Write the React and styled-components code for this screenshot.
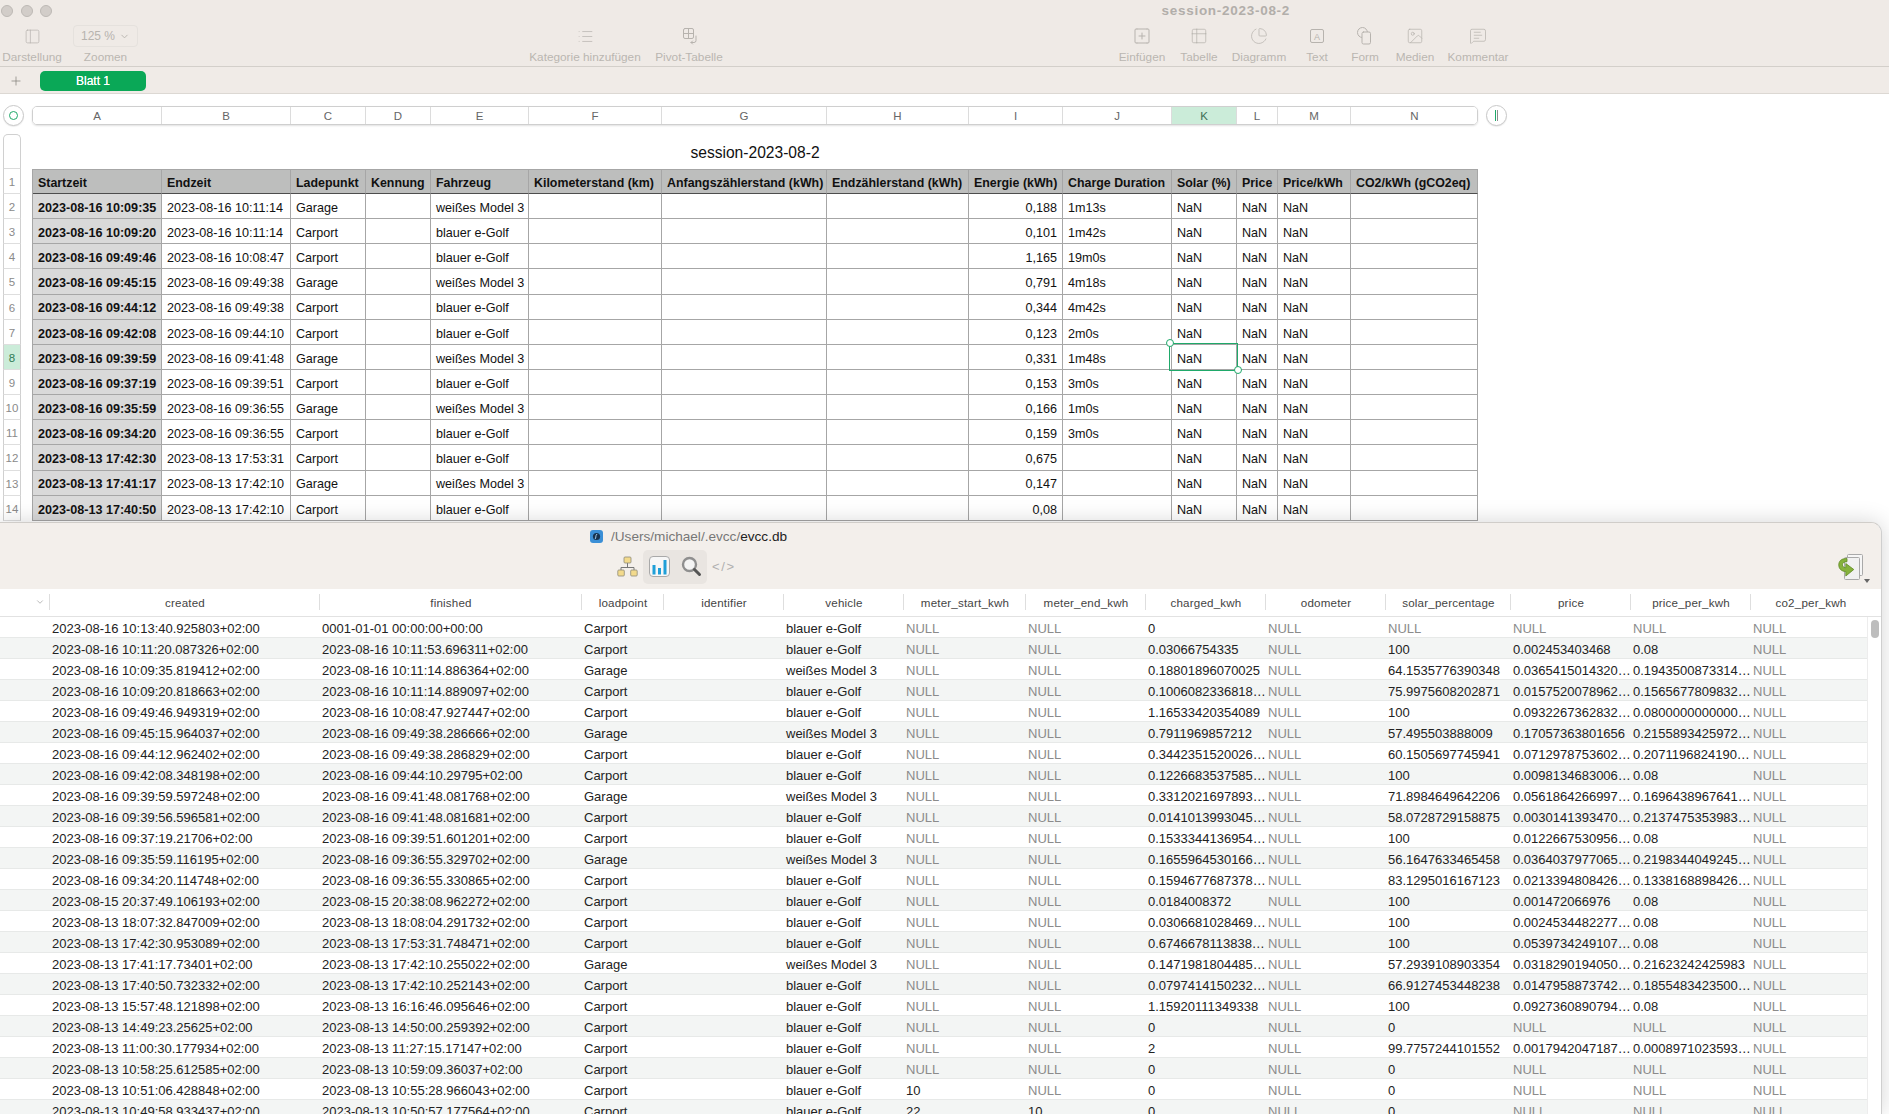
import React from "react";
import styled, { createGlobalStyle } from "styled-components";
import { Plus, ChevronDown, List, Table2, PanelLeft, ChartPie, Image as ImageIcon, MessageSquareText } from "lucide-react";

const Global = createGlobalStyle`
  html, body { margin: 0; padding: 0; background: #fff; }
  body { font-family: "Liberation Sans", Arial, sans-serif; color: #111; }
  * { box-sizing: border-box; }
`;

const Page = styled.div`
  width: 1889px; height: 1114px; overflow: hidden; background: #fff;
  display: flex; flex-direction: column;
`;
const NumbersWindow = styled.section`
  flex: 0 0 522px; height: 522px; overflow: hidden; display: flex; flex-direction: column;
`;
const Toolbar = styled.header`
  flex: 0 0 67px; background: #efeae6; border-bottom: 1px solid #d3cfca;
  display: flex; flex-direction: column; 
`;
const TitleRow = styled.div`
  height: 21px; display: flex; align-items: center; padding-left: 1px; margin-bottom: 1px;
`;
const Light = styled.span`
  width: 12px; height: 12px; border-radius: 50%; background: #d2cdc9; border: 1px solid #bdb9b5;
  margin-right: 7.5px;
`;
const DocTitle = styled.div`
  margin-left: 1102px; font-size: 13.5px; font-weight: 700; letter-spacing: .72px; color: #b2aeaa; white-space: nowrap;
`;
const ToolRow = styled.div`
  display: flex; height: 44px; align-items: flex-start;
`;
const ToolItem = styled.div`
  flex: 0 0 ${p => p.$w}px; margin-left: ${p => p.$gap || 0}px;
  display: flex; flex-direction: column; align-items: center; color: #b7b3ae;
`;
const ToolGlyph = styled.div`
  height: 25px; padding-top: 3px; display: flex; align-items: center; justify-content: center;
`;
const ToolLabel = styled.div`
  margin-top: 3px; font-size: 11.8px; line-height: 14px; color: #bab6b1; white-space: nowrap;
`;
const ZoomBox = styled.div`
  width: 65px; height: 22px; border: 1px solid #e5e1dd; border-radius: 4px; margin-top: 3px;
  display: flex; align-items: center; justify-content: center; gap: 4px;
  font-size: 12px; color: #b7b3ae;
`;
const TabBar = styled.nav`
  flex: 0 0 27px; background: #f0ebe7; border-bottom: 1px solid #dcd8d3;
  display: flex; align-items: center; color: #7f7b77; padding: 1px 0 0 9px;
`;
const Tab = styled.div`
  margin-left: 17px; width: 106px; height: 20px; border-radius: 5px; background: #0aa857; color: #fff;
  display: flex; align-items: center; justify-content: center; font-size: 12px; font-weight: 400;
  text-shadow: 0 0 .5px #fff;
`;
const SheetArea = styled.main`
  flex: 1; min-height: 0; background: #fff; padding-top: 11px;
`;
const SheetHead = styled.div`
  height: 21px; display: flex; align-items: center; padding-left: 3px;
`;
const RoundControl = styled.div`
  flex: 0 0 21px; height: 21px; border-radius: 50%; border: 1px solid #c9c9c9; background: #fff;
  display: flex; align-items: center; justify-content: center; box-shadow: 0 1px 1px rgba(0,0,0,.08);
  margin: ${p => p.$right ? "0 0 0 8px" : "0 8px 0 0"};
`;
const Ring = styled.span`
  width: 9px; height: 9px; border-radius: 50%; border: 1.5px solid #1fa96a;
`;
const Bars = styled.span`
  width: 3.5px; height: 11px; border-left: 1px solid #1fa96a; border-right: 1px solid #8d8d8d;
`;
const colTemplate = "129px 129px 75px 65px 98px 133px 165px 142px 94px 109px 65px 41px 73px 127px";
const ColumnStrip = styled.div`
  display: grid; grid-template-columns: ${colTemplate}; width: 1446px; height: 19px;
  border: 1px solid #cfcfcf; border-right-width: 1px; border-radius: 5px; overflow: hidden;
  box-shadow: 0 1px 2px rgba(0,0,0,.12);
`;
const ColumnLetter = styled.div`
  display: flex; align-items: center; justify-content: center; font-size: 11.5px;
  color: ${p => p.$active ? "#3f6f56" : "#666"};
  background: ${p => p.$active ? "#cbecd9" : "#fff"};
  border-right: ${p => p.$last ? 0 : 1}px solid #dcdcdc;
`;
const SheetBody = styled.div`
  display: flex; margin-top: 8px; padding-left: 3px;
`;
const Gutter = styled.div`
  flex: 0 0 18px; margin-right: 11px; display: flex; flex-direction: column;
`;
const GutterTop = styled.div`
  height: 35px; border: 1px solid #d0d0d0; border-bottom-color: #dcdcdc; border-radius: 5px 5px 0 0;
`;
const RowNumber = styled.div`
  height: ${p => p.$h}px; border: 1px solid #d0d0d0; border-top: 0; border-bottom-color: #dedede;
  display: flex; align-items: center; justify-content: center; font-size: 11.5px; padding-top: 2px;
  color: ${p => p.$active ? "#2f7d55" : "#8a8a8a"};
  background: ${p => p.$active ? "#cbecd9" : "#fff"};
`;
const SheetColumn = styled.div`
  display: flex; flex-direction: column;
`;
const SheetTitle = styled.div`
  height: 35px; width: 1446px; display: flex; align-items: center; justify-content: center;
  font-size: 15.6px; color: #111; padding-top: 2px;
`;
const Table = styled.div`
  display: grid; grid-template-columns: ${colTemplate};
  grid-template-rows: 25px repeat(13, 25.15px);
  border-left: 1px solid #a6a6a6; width: 1446px;
`;
const HeadCell = styled.div`
  background: #bdbebd; border-right: 1px solid #a6a6a6; border-top: 1px solid #a6a6a6;
  border-bottom: 1.5px solid #4d4d4d; display: flex; align-items: center; padding: 2px 5px 0;
  font-size: 12.4px; font-weight: 700; white-space: nowrap; color: #111;
`;
const Cell = styled.div`
  position: relative; display: flex; align-items: center; padding: 3.5px 5px 0; font-size: 12.6px; white-space: nowrap; color: #111;
  justify-content: ${p => p.$right ? "flex-end" : "flex-start"};
  font-weight: ${p => p.$bold ? 700 : 400};
  background: ${p => p.$bold ? "#d9d9d9" : "#fff"};
  border-right: 1px solid #a6a6a6; border-bottom: 1px solid #a6a6a6;
`;
const Selection = styled.div`
  position: absolute; top: -2px; left: -3px; right: -2px; bottom: -2px; border: 1.5px solid #1fa96a; z-index: 2;
`;
const Handle = styled.span`
  position: absolute; width: 8px; height: 8px; border-radius: 50%; background: #fff; border: 1.2px solid #1fa96a;
  ${p => p.$end ? "right: -4.5px; bottom: -4.5px;" : "left: -4.5px; top: -4.5px;"}
`;
const DbWindow = styled.section`
  position: relative; z-index: 3; flex: 1; min-height: 0; width: 1882px; overflow: hidden;
  border-top: 1px solid #d0cdc9; border-right: 1px solid #cfcfcf; border-radius: 0 11px 0 0;
  background: #fff; box-shadow: 0 0 22px rgba(0,0,0,.17);
  display: flex; flex-direction: column;
`;
const DbToolbar = styled.header`
  flex: 0 0 66px; background: #f3efeb; display: flex; flex-direction: column;
`;
const PathRow = styled.div`
  height: 26.5px; display: flex; align-items: center; padding-left: 590px; gap: 8px;
`;
const PathText = styled.div`
  font-size: 13.6px; color: #777;
  b { font-weight: 400; color: #222; }
`;
const ActionRow = styled.div`
  height: 34px; display: flex; align-items: center; padding-left: 611px; padding-right: 18px;
`;
const ActionButton = styled.div`
  width: 32px; height: 34px; display: flex; align-items: center; justify-content: center;
  border-radius: ${p => p.$pos === "l" ? "5px 0 0 5px" : p.$pos === "r" ? "0 5px 5px 0" : "5px"};
  background: ${p => p.$on ? "#e9e5e1" : "transparent"};
`;
const CodeMark = styled.div`
  margin-left: 5px; color: #b0b0b0; font-size: 13px; letter-spacing: 1.6px; font-weight: 400;
`;
const ExportWrap = styled.div`
  margin-left: auto; position: relative; display: flex;
`;
const Caret = styled.span`
  position: absolute; right: -7px; bottom: -3px; width: 0; height: 0;
  border-left: 3px solid transparent; border-right: 3px solid transparent; border-top: 4px solid #666;
`;
const dbBase = "50px 270px 262px 82px 120px 120px 122px 120px 120px 120px 125px 120px 120px";
const DbHeader = styled.div`
  flex: 0 0 28px; display: grid; grid-template-columns: ${dbBase} 120px; align-items: center;
  background: #fff; border-bottom: 1px solid #e2e2e2; padding-bottom: 1px;
`;
const DbHeadCell = styled.div`
  height: 16px; display: flex; align-items: center; justify-content: center; font-size: 11.6px;
  letter-spacing: .18px; color: #444; border-left: 1px solid #dedede; white-space: nowrap; margin-left: -1px;
`;
const SortCell = styled.div`
  display: flex; justify-content: flex-end; padding-right: 5px; color: #777;
`;
const DbBody = styled.div`
  flex: 1; min-height: 0; display: flex;
`;
const DbRows = styled.div`
  flex: 0 0 1867px; display: flex; flex-direction: column;
`;
const DbRow = styled.div`
  flex: 0 0 21px; display: grid; grid-template-columns: ${dbBase} 116px; align-items: start;
  background: ${p => p.$alt ? "#f3f5f4" : "#fff"}; border-bottom: 1px solid #e7e9e8;
`;
const DbCell = styled.div`
  padding: 3px 0 0 2px; font-size: 13px; line-height: 17px; white-space: nowrap;
  color: ${p => p.$null ? "#8b8b8b" : "#222"};
`;
const ScrollTrack = styled.div`
  flex: 1; border-left: 1px solid #ededed; background: #fff; padding: 3px 0 0 3px;
`;
const ScrollThumb = styled.div`
  width: 8px; height: 18px; border-radius: 4px; background: #bdbdbd;
`;

const Ico = ({ children, w = 20, h = 20, fill = "none" }) => (
  <svg width={w} height={h} viewBox={`0 0 ${w} ${h}`} fill={fill} stroke="#b7b3ae" strokeWidth="1" strokeLinecap="round" strokeLinejoin="round">{children}</svg>
);
const PivotIcon = () => (
  <Ico><rect x="4.5" y="2.5" width="10" height="10" rx="1.5" /><path d="M4.5 7.5h10M9.5 2.5v10M17 10v4.5a2 2 0 0 1-2 2h-3M13.5 15l-1.5 1.5 1.5 1.5" /></Ico>
);
const InsertIcon = () => (
  <Ico><path d="M5 3H4a1 1 0 0 0-1 1v12a1 1 0 0 0 1 1h1M15 3h1a1 1 0 0 1 1 1v12a1 1 0 0 1-1 1h-1M5 3h10M5 17h10M10 7v6M7 10h6" /></Ico>
);
const TextIcon = () => (
  <svg width="20" height="20" viewBox="0 0 20 20">
    <rect x="3.5" y="3.5" width="13" height="13" rx="1.5" fill="none" stroke="#b7b3ae" />
    <text x="10" y="13.5" textAnchor="middle" fontSize="9" fontFamily="Liberation Sans" fill="#b7b3ae">A</text>
  </svg>
);
const FormIcon = () => (
  <Ico><circle cx="7.5" cy="6.5" r="5" /><rect x="7" y="6" width="8.5" height="12" rx="1.5" fill="#efeae6" /></Ico>
);
const DbGlyph = () => (
  <svg width="13" height="13" viewBox="0 0 13 13">
    <rect width="13" height="13" rx="3" fill="#3b8fd6" />
    <circle cx="6.5" cy="6.5" r="3.6" fill="#17324d" />
    <path d="M5 9c1.5-1 0-3 2-5" stroke="#a9d0ef" strokeWidth="1" fill="none" />
  </svg>
);
const HierarchyIcon = () => (
  <svg width="21" height="21" viewBox="0 0 21 21">
    <path d="M10.5 7v4M4 15v-3.5h13V15" fill="none" stroke="#777" strokeWidth="1" />
    <rect x="7" y="1" width="7" height="6" rx="1" fill="#f3da8c" stroke="#8d8a78" strokeWidth=".8" />
    <rect x=".8" y="14" width="6.5" height="6" rx="1" fill="#f3da8c" stroke="#8d8a78" strokeWidth=".8" />
    <rect x="13.7" y="14" width="6.5" height="6" rx="1" fill="#f3da8c" stroke="#8d8a78" strokeWidth=".8" />
  </svg>
);
const ChartIcon = () => (
  <svg width="21" height="21" viewBox="0 0 21 21">
    <rect x=".5" y=".5" width="20" height="20" rx="3.5" fill="#f7f7f7" stroke="#a9a9a9" />
    <rect x="3.5" y="9" width="3" height="9.5" fill="#1f9fd8" />
    <rect x="9" y="12" width="3" height="6.5" fill="#1f9fd8" />
    <rect x="14.5" y="4" width="3" height="14.5" fill="#1f9fd8" />
  </svg>
);
const SearchIcon = () => (
  <svg width="21" height="21" viewBox="0 0 21 21">
    <circle cx="8.5" cy="8.5" r="6.5" fill="#f4f4f4" stroke="#8f8f8f" strokeWidth="2.4" />
    <path d="M13.5 13.5l5 5" stroke="#555" strokeWidth="3" strokeLinecap="round" />
  </svg>
);
const ExportIcon = () => (
  <svg width="25" height="26" viewBox="0 0 25 26">
    <rect x="9.5" y=".5" width="15" height="21" rx="1" fill="#f6f6f6" stroke="#a9a9a9" />
    <rect x="6.5" y="3.5" width="15" height="22" rx="1" fill="#f1f1f1" stroke="#a9a9a9" />
    <path d="M9 4.5C2 4.5.8 8 .8 11c0 4 3 6.5 7 6.5V22l8-6.5-8-6v4.2c-2 0-3.4-1-3.4-3 0-2 2-3 4.6-3z" fill="#86b23c" stroke="#5f8a25" strokeWidth=".8" />
  </svg>
);

const W = "weißes Model 3", B = "blauer e-Golf";
const sheetRows = [
  ["2023-08-16 10:09:35", "2023-08-16 10:11:14", "Garage", W, "0,188", "1m13s"],
  ["2023-08-16 10:09:20", "2023-08-16 10:11:14", "Carport", B, "0,101", "1m42s"],
  ["2023-08-16 09:49:46", "2023-08-16 10:08:47", "Carport", B, "1,165", "19m0s"],
  ["2023-08-16 09:45:15", "2023-08-16 09:49:38", "Garage", W, "0,791", "4m18s"],
  ["2023-08-16 09:44:12", "2023-08-16 09:49:38", "Carport", B, "0,344", "4m42s"],
  ["2023-08-16 09:42:08", "2023-08-16 09:44:10", "Carport", B, "0,123", "2m0s"],
  ["2023-08-16 09:39:59", "2023-08-16 09:41:48", "Garage", W, "0,331", "1m48s"],
  ["2023-08-16 09:37:19", "2023-08-16 09:39:51", "Carport", B, "0,153", "3m0s"],
  ["2023-08-16 09:35:59", "2023-08-16 09:36:55", "Garage", W, "0,166", "1m0s"],
  ["2023-08-16 09:34:20", "2023-08-16 09:36:55", "Carport", B, "0,159", "3m0s"],
  ["2023-08-13 17:42:30", "2023-08-13 17:53:31", "Carport", B, "0,675", ""],
  ["2023-08-13 17:41:17", "2023-08-13 17:42:10", "Garage", W, "0,147", ""],
  ["2023-08-13 17:40:50", "2023-08-13 17:42:10", "Carport", B, "0,08", ""],
];
const sheetHead = ["Startzeit", "Endzeit", "Ladepunkt", "Kennung", "Fahrzeug", "Kilometerstand (km)", "Anfangszählerstand (kWh)", "Endzählerstand (kWh)", "Energie (kWh)", "Charge Duration", "Solar (%)", "Price", "Price/kWh", "CO2/kWh (gCO2eq)"];
const letters = "ABCDEFGHIJKLMN".split("");

const d16 = "2023-08-16 ", d13 = "2023-08-13 ", tz = "+02:00", N = "NULL";
const dbRows = [
  [d16 + "10:13:40.925803" + tz, "0001-01-01 00:00:00+00:00", "Carport", B, N, N, "0", N, N, N, N],
  [d16 + "10:11:20.087326" + tz, d16 + "10:11:53.696311" + tz, "Carport", B, N, N, "0.03066754335", N, "100", "0.002453403468", "0.08"],
  [d16 + "10:09:35.819412" + tz, d16 + "10:11:14.886364" + tz, "Garage", W, N, N, "0.18801896070025", N, "64.1535776390348", "0.0365415014320…", "0.1943500873314…"],
  [d16 + "10:09:20.818663" + tz, d16 + "10:11:14.889097" + tz, "Carport", B, N, N, "0.1006082336818…", N, "75.9975608202871", "0.0157520078962…", "0.1565677809832…"],
  [d16 + "09:49:46.949319" + tz, d16 + "10:08:47.927447" + tz, "Carport", B, N, N, "1.16533420354089", N, "100", "0.0932267362832…", "0.0800000000000…"],
  [d16 + "09:45:15.964037" + tz, d16 + "09:49:38.286666" + tz, "Garage", W, N, N, "0.7911969857212", N, "57.495503888009", "0.17057363801656", "0.2155893425972…"],
  [d16 + "09:44:12.962402" + tz, d16 + "09:49:38.286829" + tz, "Carport", B, N, N, "0.3442351520026…", N, "60.1505697745941", "0.0712978753602…", "0.2071196824190…"],
  [d16 + "09:42:08.348198" + tz, d16 + "09:44:10.29795" + tz, "Carport", B, N, N, "0.1226683537585…", N, "100", "0.0098134683006…", "0.08"],
  [d16 + "09:39:59.597248" + tz, d16 + "09:41:48.081768" + tz, "Garage", W, N, N, "0.3312021697893…", N, "71.8984649642206", "0.0561864266997…", "0.1696438967641…"],
  [d16 + "09:39:56.596581" + tz, d16 + "09:41:48.081681" + tz, "Carport", B, N, N, "0.0141013993045…", N, "58.0728729158875", "0.0030141393470…", "0.2137475353983…"],
  [d16 + "09:37:19.21706" + tz, d16 + "09:39:51.601201" + tz, "Carport", B, N, N, "0.1533344136954…", N, "100", "0.0122667530956…", "0.08"],
  [d16 + "09:35:59.116195" + tz, d16 + "09:36:55.329702" + tz, "Garage", W, N, N, "0.1655964530166…", N, "56.1647633465458", "0.0364037977065…", "0.2198344049245…"],
  [d16 + "09:34:20.114748" + tz, d16 + "09:36:55.330865" + tz, "Carport", B, N, N, "0.1594677687378…", N, "83.1295016167123", "0.0213394808426…", "0.1338168898426…"],
  ["2023-08-15 20:37:49.106193" + tz, "2023-08-15 20:38:08.962272" + tz, "Carport", B, N, N, "0.0184008372", N, "100", "0.001472066976", "0.08"],
  [d13 + "18:07:32.847009" + tz, d13 + "18:08:04.291732" + tz, "Carport", B, N, N, "0.0306681028469…", N, "100", "0.0024534482277…", "0.08"],
  [d13 + "17:42:30.953089" + tz, d13 + "17:53:31.748471" + tz, "Carport", B, N, N, "0.6746678113838…", N, "100", "0.0539734249107…", "0.08"],
  [d13 + "17:41:17.73401" + tz, d13 + "17:42:10.255022" + tz, "Garage", W, N, N, "0.1471981804485…", N, "57.2939108903354", "0.0318290194050…", "0.21623242425983"],
  [d13 + "17:40:50.732332" + tz, d13 + "17:42:10.252143" + tz, "Carport", B, N, N, "0.0797414150232…", N, "66.9127453448238", "0.0147958873742…", "0.1855483423500…"],
  [d13 + "15:57:48.121898" + tz, d13 + "16:16:46.095646" + tz, "Carport", B, N, N, "1.15920111349338", N, "100", "0.0927360890794…", "0.08"],
  [d13 + "14:49:23.25625" + tz, d13 + "14:50:00.259392" + tz, "Carport", B, N, N, "0", N, "0", N, N],
  [d13 + "11:00:30.177934" + tz, d13 + "11:27:15.17147" + tz, "Carport", B, N, N, "2", N, "99.7757244101552", "0.0017942047187…", "0.0008971023593…"],
  [d13 + "10:58:25.612585" + tz, d13 + "10:59:09.36037" + tz, "Carport", B, N, N, "0", N, "0", N, N],
  [d13 + "10:51:06.428848" + tz, d13 + "10:55:28.966043" + tz, "Carport", B, "10", N, "0", N, "0", N, N],
  [d13 + "10:49:58.933437" + tz, d13 + "10:50:57.177564" + tz, "Carport", B, "22", "10", "0", N, "0", N, N],
];
const dbHead = ["created", "finished", "loadpoint", "identifier", "vehicle", "meter_start_kwh", "meter_end_kwh", "charged_kwh", "odometer", "solar_percentage", "price", "price_per_kwh", "co2_per_kwh"];

const Val = ({ v }) => <DbCell $null={v === N}>{v}</DbCell>;

export default function App() {
  return (
    <Page>
      <Global />
      <NumbersWindow>
        <Toolbar>
          <TitleRow>
            <Light /><Light /><Light />
            <DocTitle>session-2023-08-2</DocTitle>
          </TitleRow>
          <ToolRow>
            <ToolItem $w={64}><ToolGlyph><PanelLeft size={17} strokeWidth={1} /></ToolGlyph><ToolLabel>Darstellung</ToolLabel></ToolItem>
            <ToolItem $w={83}>
              <ZoomBox>125 %<ChevronDown size={11} /></ZoomBox>
              <ToolLabel>Zoomen</ToolLabel>
            </ToolItem>
            <ToolItem $w={120} $gap={378}><ToolGlyph><List size={17} strokeWidth={1} /></ToolGlyph><ToolLabel>Kategorie hinzufügen</ToolLabel></ToolItem>
            <ToolItem $w={88}><ToolGlyph><PivotIcon /></ToolGlyph><ToolLabel>Pivot-Tabelle</ToolLabel></ToolItem>
            <ToolItem $w={60} $gap={379}><ToolGlyph><InsertIcon /></ToolGlyph><ToolLabel>Einfügen</ToolLabel></ToolItem>
            <ToolItem $w={54}><ToolGlyph><Table2 size={18} strokeWidth={1} /></ToolGlyph><ToolLabel>Tabelle</ToolLabel></ToolItem>
            <ToolItem $w={66}><ToolGlyph><ChartPie size={18} strokeWidth={1} /></ToolGlyph><ToolLabel>Diagramm</ToolLabel></ToolItem>
            <ToolItem $w={50}><ToolGlyph><TextIcon /></ToolGlyph><ToolLabel>Text</ToolLabel></ToolItem>
            <ToolItem $w={46}><ToolGlyph><FormIcon /></ToolGlyph><ToolLabel>Form</ToolLabel></ToolItem>
            <ToolItem $w={54}><ToolGlyph><ImageIcon size={18} strokeWidth={1} /></ToolGlyph><ToolLabel>Medien</ToolLabel></ToolItem>
            <ToolItem $w={72}><ToolGlyph><MessageSquareText size={18} strokeWidth={1} /></ToolGlyph><ToolLabel>Kommentar</ToolLabel></ToolItem>
          </ToolRow>
        </Toolbar>
        <TabBar>
          <Plus size={14} strokeWidth={1.2} />
          <Tab>Blatt 1</Tab>
        </TabBar>
        <SheetArea>
          <SheetHead>
            <RoundControl><Ring /></RoundControl>
            <ColumnStrip>
              {letters.map((l, i) => <ColumnLetter key={l} $active={l === "K"} $last={i === 13}>{l}</ColumnLetter>)}
            </ColumnStrip>
            <RoundControl $right><Bars /></RoundControl>
          </SheetHead>
          <SheetBody>
            <Gutter>
              <GutterTop />
              <RowNumber $h={25}>1</RowNumber>
              {sheetRows.map((_, i) => <RowNumber key={i} $h={25.15} $active={i === 6}>{i + 2}</RowNumber>)}
            </Gutter>
            <SheetColumn>
              <SheetTitle>session-2023-08-2</SheetTitle>
              <Table>
                {sheetHead.map(h => <HeadCell key={h}>{h}</HeadCell>)}
                {sheetRows.map((r, i) => (
                  <React.Fragment key={i}>
                    <Cell $bold>{r[0]}</Cell>
                    <Cell>{r[1]}</Cell>
                    <Cell>{r[2]}</Cell>
                    <Cell />
                    <Cell>{r[3]}</Cell>
                    <Cell />
                    <Cell />
                    <Cell />
                    <Cell $right>{r[4]}</Cell>
                    <Cell>{r[5]}</Cell>
                    <Cell>NaN{i === 6 && <Selection><Handle /><Handle $end /></Selection>}</Cell>
                    <Cell>NaN</Cell>
                    <Cell>NaN</Cell>
                    <Cell />
                  </React.Fragment>
                ))}
              </Table>
            </SheetColumn>
          </SheetBody>
        </SheetArea>
      </NumbersWindow>
      <DbWindow>
        <DbToolbar>
          <PathRow>
            <DbGlyph />
            <PathText>/Users/michael/.evcc/<b>evcc.db</b></PathText>
          </PathRow>
          <ActionRow>
            <ActionButton><HierarchyIcon /></ActionButton>
            <ActionButton $on $pos="l"><ChartIcon /></ActionButton>
            <ActionButton $on $pos="r"><SearchIcon /></ActionButton>
            <CodeMark>&lt;/&gt;</CodeMark>
            <ExportWrap><ExportIcon /><Caret /></ExportWrap>
          </ActionRow>
        </DbToolbar>
        <DbHeader>
          <SortCell><ChevronDown size={10} strokeWidth={1.2} /></SortCell>
          {dbHead.map(h => <DbHeadCell key={h}>{h}</DbHeadCell>)}
        </DbHeader>
        <DbBody>
          <DbRows>
            {dbRows.map((r, i) => (
              <DbRow key={i} $alt={i % 2 === 1}>
                <DbCell />
                <Val v={r[0]} />
                <Val v={r[1]} />
                <Val v={r[2]} />
                <DbCell />
                <Val v={r[3]} />
                <Val v={r[4]} />
                <Val v={r[5]} />
                <Val v={r[6]} />
                <Val v={r[7]} />
                <Val v={r[8]} />
                <Val v={r[9]} />
                <Val v={r[10]} />
                <Val v={N} />
              </DbRow>
            ))}
          </DbRows>
          <ScrollTrack><ScrollThumb /></ScrollTrack>
        </DbBody>
      </DbWindow>
    </Page>
  );
}
